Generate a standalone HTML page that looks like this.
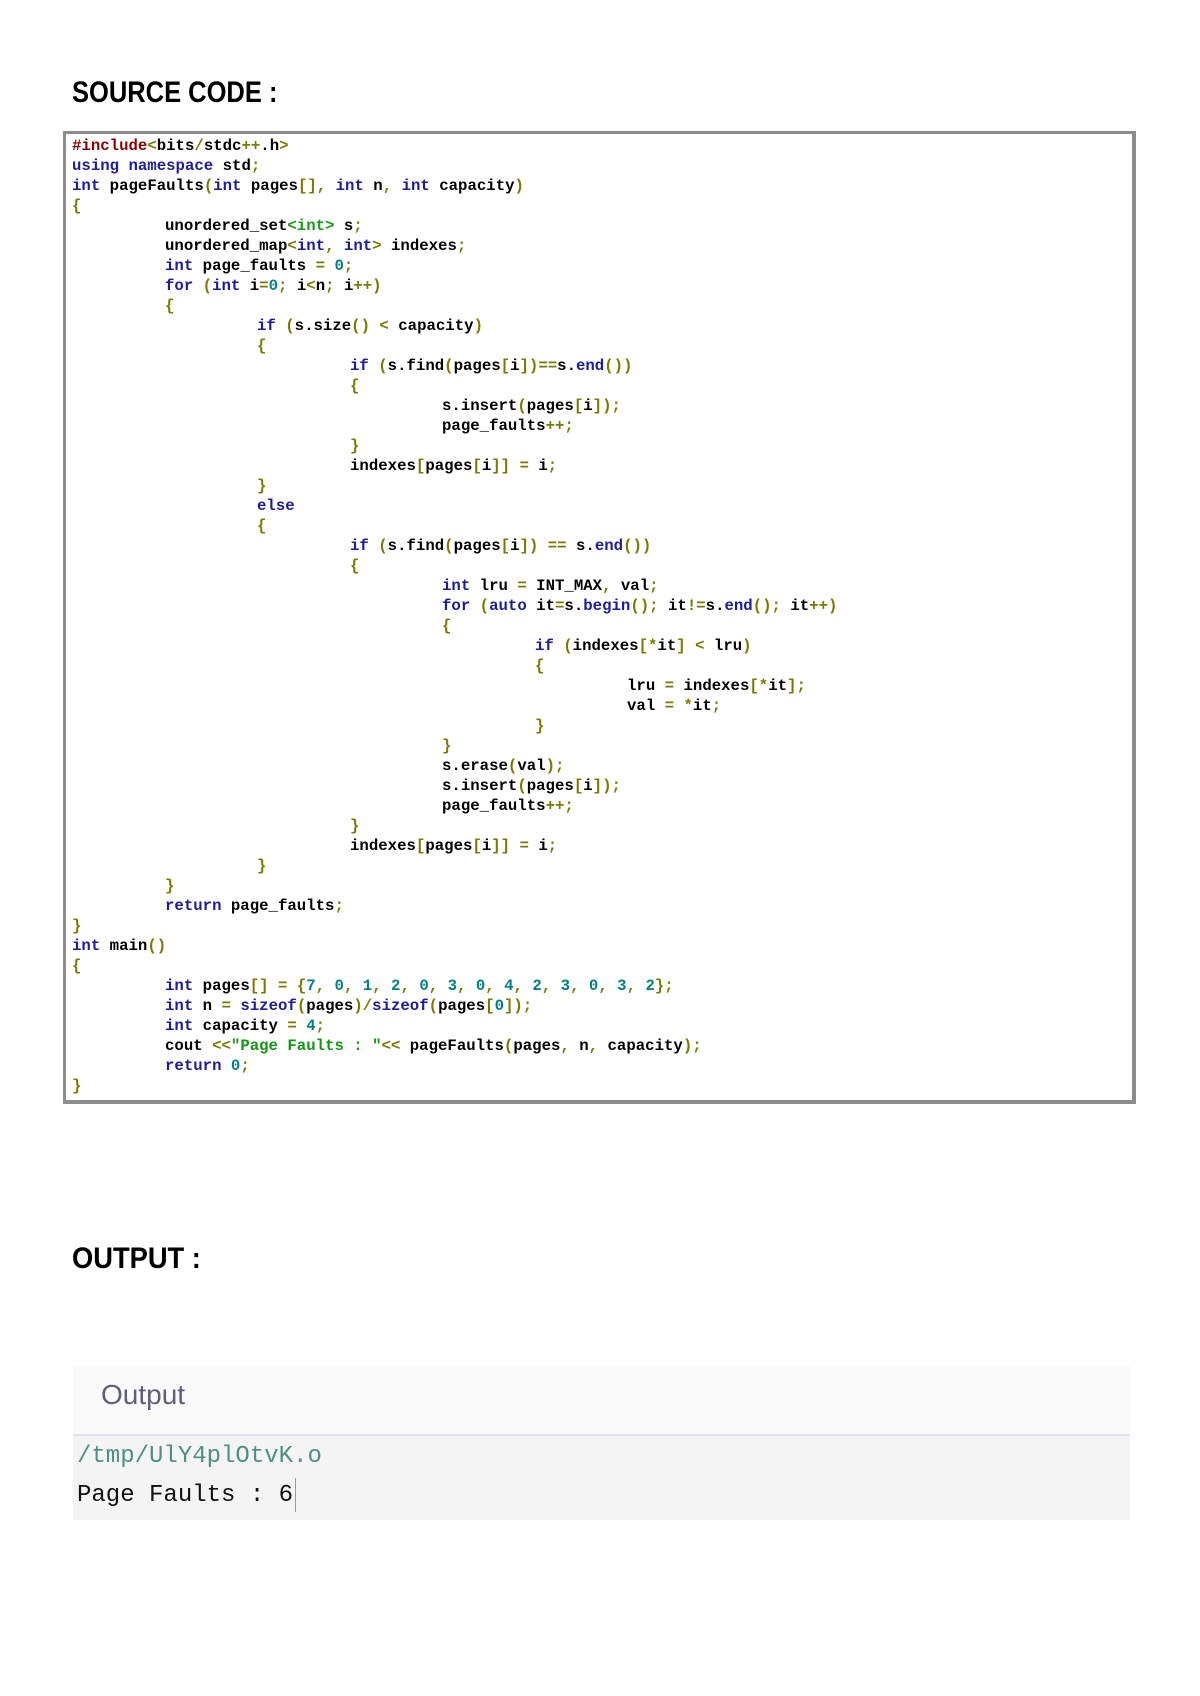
<!DOCTYPE html>
<html><head><meta charset="utf-8"><style>
html,body{margin:0;padding:0;background:#fff;width:1200px;height:1696px;overflow:hidden;position:relative}
.t{position:absolute;left:72px;font-family:"Liberation Sans",sans-serif;font-weight:bold;font-size:30px;color:#000;transform-origin:0 0;white-space:nowrap;line-height:30px}
.box{position:absolute;left:63px;top:131px;width:1066px;height:966px;border:3px solid #8c8c8c;border-right-width:4px;border-bottom-width:4px;background:#fff}
.l{position:absolute;font-family:"Liberation Mono",monospace;font-weight:bold;font-size:15.7px;line-height:20px;white-space:pre;color:#000}
.k{color:#1c1c9c}.p{color:#7a7a00}.n{color:#008080}.g{color:#1a9a1a}.r{color:#8b0000}.s{color:#119911}
.ob{position:absolute;left:73px;top:1366px;width:1057px;height:154px;background:#f4f4f4}
.oh{position:absolute;left:0;top:0;width:100%;height:68px;background:#fafafa;border-bottom:2px solid #dfe5ec}
.ot{position:absolute;left:28px;top:12px;font-family:"Liberation Sans",sans-serif;font-size:28px;color:#5d5f7d;line-height:34px}
.m{position:absolute;left:4px;font-family:"Liberation Mono","DejaVu Sans Mono",monospace;font-size:24px;line-height:30px;white-space:pre}
</style></head><body>
<div class="t" style="top:78px;transform:scaleX(0.85)">SOURCE CODE :</div>
<div class="box"></div>
<div class="l" style="left:72px;top:136px"><span class="r">#include</span><span class="p">&lt;</span>bits<span class="p">/</span>stdc<span class="p">++</span>.h<span class="p">&gt;</span></div>
<div class="l" style="left:72px;top:156px"><span class="k">using namespace</span> std<span class="p">;</span></div>
<div class="l" style="left:72px;top:176px"><span class="k">int</span> pageFaults<span class="p">(</span><span class="k">int</span> pages<span class="p">[],</span> <span class="k">int</span> n<span class="p">,</span> <span class="k">int</span> capacity<span class="p">)</span></div>
<div class="l p" style="left:72px;top:196px">{</div>
<div class="l" style="left:165px;top:216px">unordered_set<span class="g">&lt;int&gt;</span> s<span class="p">;</span></div>
<div class="l" style="left:165px;top:236px">unordered_map<span class="p">&lt;</span><span class="k">int</span><span class="p">,</span> <span class="k">int</span><span class="p">&gt;</span> indexes<span class="p">;</span></div>
<div class="l" style="left:165px;top:256px"><span class="k">int</span> page_faults <span class="p">=</span> <span class="n">0</span><span class="p">;</span></div>
<div class="l" style="left:165px;top:276px"><span class="k">for</span> <span class="p">(</span><span class="k">int</span> i<span class="p">=</span><span class="n">0</span><span class="p">;</span> i<span class="p">&lt;</span>n<span class="p">;</span> i<span class="p">++)</span></div>
<div class="l p" style="left:165px;top:296px">{</div>
<div class="l" style="left:257px;top:316px"><span class="k">if</span> <span class="p">(</span>s.size<span class="p">()</span> <span class="p">&lt;</span> capacity<span class="p">)</span></div>
<div class="l p" style="left:257px;top:336px">{</div>
<div class="l" style="left:350px;top:356px"><span class="k">if</span> <span class="p">(</span>s.find<span class="p">(</span>pages<span class="p">[</span>i<span class="p">])==</span>s.<span class="k">end</span><span class="p">())</span></div>
<div class="l p" style="left:350px;top:376px">{</div>
<div class="l" style="left:442px;top:396px">s.insert<span class="p">(</span>pages<span class="p">[</span>i<span class="p">]);</span></div>
<div class="l" style="left:442px;top:416px">page_faults<span class="p">++;</span></div>
<div class="l p" style="left:350px;top:436px">}</div>
<div class="l" style="left:350px;top:456px">indexes<span class="p">[</span>pages<span class="p">[</span>i<span class="p">]]</span> <span class="p">=</span> i<span class="p">;</span></div>
<div class="l p" style="left:257px;top:476px">}</div>
<div class="l k" style="left:257px;top:496px">else</div>
<div class="l p" style="left:257px;top:516px">{</div>
<div class="l" style="left:350px;top:536px"><span class="k">if</span> <span class="p">(</span>s.find<span class="p">(</span>pages<span class="p">[</span>i<span class="p">])</span> <span class="p">==</span> s.<span class="k">end</span><span class="p">())</span></div>
<div class="l p" style="left:350px;top:556px">{</div>
<div class="l" style="left:442px;top:576px"><span class="k">int</span> lru <span class="p">=</span> INT_MAX<span class="p">,</span> val<span class="p">;</span></div>
<div class="l" style="left:442px;top:596px"><span class="k">for</span> <span class="p">(</span><span class="k">auto</span> it<span class="p">=</span>s.<span class="k">begin</span><span class="p">();</span> it<span class="p">!=</span>s.<span class="k">end</span><span class="p">();</span> it<span class="p">++)</span></div>
<div class="l p" style="left:442px;top:616px">{</div>
<div class="l" style="left:535px;top:636px"><span class="k">if</span> <span class="p">(</span>indexes<span class="p">[*</span>it<span class="p">]</span> <span class="p">&lt;</span> lru<span class="p">)</span></div>
<div class="l p" style="left:535px;top:656px">{</div>
<div class="l" style="left:627px;top:676px">lru <span class="p">=</span> indexes<span class="p">[*</span>it<span class="p">];</span></div>
<div class="l" style="left:627px;top:696px">val <span class="p">=</span> <span class="p">*</span>it<span class="p">;</span></div>
<div class="l p" style="left:535px;top:716px">}</div>
<div class="l p" style="left:442px;top:736px">}</div>
<div class="l" style="left:442px;top:756px">s.erase<span class="p">(</span>val<span class="p">);</span></div>
<div class="l" style="left:442px;top:776px">s.insert<span class="p">(</span>pages<span class="p">[</span>i<span class="p">]);</span></div>
<div class="l" style="left:442px;top:796px">page_faults<span class="p">++;</span></div>
<div class="l p" style="left:350px;top:816px">}</div>
<div class="l" style="left:350px;top:836px">indexes<span class="p">[</span>pages<span class="p">[</span>i<span class="p">]]</span> <span class="p">=</span> i<span class="p">;</span></div>
<div class="l p" style="left:257px;top:856px">}</div>
<div class="l p" style="left:165px;top:876px">}</div>
<div class="l" style="left:165px;top:896px"><span class="k">return</span> page_faults<span class="p">;</span></div>
<div class="l p" style="left:72px;top:916px">}</div>
<div class="l" style="left:72px;top:936px"><span class="k">int</span> main<span class="p">()</span></div>
<div class="l p" style="left:72px;top:956px">{</div>
<div class="l" style="left:165px;top:976px"><span class="k">int</span> pages<span class="p">[]</span> <span class="p">=</span> <span class="p">{</span><span class="n">7</span><span class="p">,</span> <span class="n">0</span><span class="p">,</span> <span class="n">1</span><span class="p">,</span> <span class="n">2</span><span class="p">,</span> <span class="n">0</span><span class="p">,</span> <span class="n">3</span><span class="p">,</span> <span class="n">0</span><span class="p">,</span> <span class="n">4</span><span class="p">,</span> <span class="n">2</span><span class="p">,</span> <span class="n">3</span><span class="p">,</span> <span class="n">0</span><span class="p">,</span> <span class="n">3</span><span class="p">,</span> <span class="n">2</span><span class="p">};</span></div>
<div class="l" style="left:165px;top:996px"><span class="k">int</span> n <span class="p">=</span> <span class="k">sizeof</span><span class="p">(</span>pages<span class="p">)/</span><span class="k">sizeof</span><span class="p">(</span>pages<span class="p">[</span><span class="n">0</span><span class="p">]);</span></div>
<div class="l" style="left:165px;top:1016px"><span class="k">int</span> capacity <span class="p">=</span> <span class="n">4</span><span class="p">;</span></div>
<div class="l" style="left:165px;top:1036px">cout <span class="p">&lt;&lt;</span><span class="s">"Page Faults : "</span><span class="p">&lt;&lt;</span> pageFaults<span class="p">(</span>pages<span class="p">,</span> n<span class="p">,</span> capacity<span class="p">);</span></div>
<div class="l" style="left:165px;top:1056px"><span class="k">return</span> <span class="n">0</span><span class="p">;</span></div>
<div class="l p" style="left:72px;top:1076px">}</div>

<div class="t" style="top:1244px;transform:scaleX(0.91)">OUTPUT :</div>
<div class="ob">
<div class="oh"><div class="ot">Output</div></div>
<div class="m" style="top:76px;color:#4f8f84">/tmp/UlY4plOtvK.o</div>
<div class="m" style="top:115px;color:#111">Page Faults : 6</div>
<div style="position:absolute;left:222px;top:112px;width:1px;height:34px;background:#999"></div>
</div>
</body></html>
